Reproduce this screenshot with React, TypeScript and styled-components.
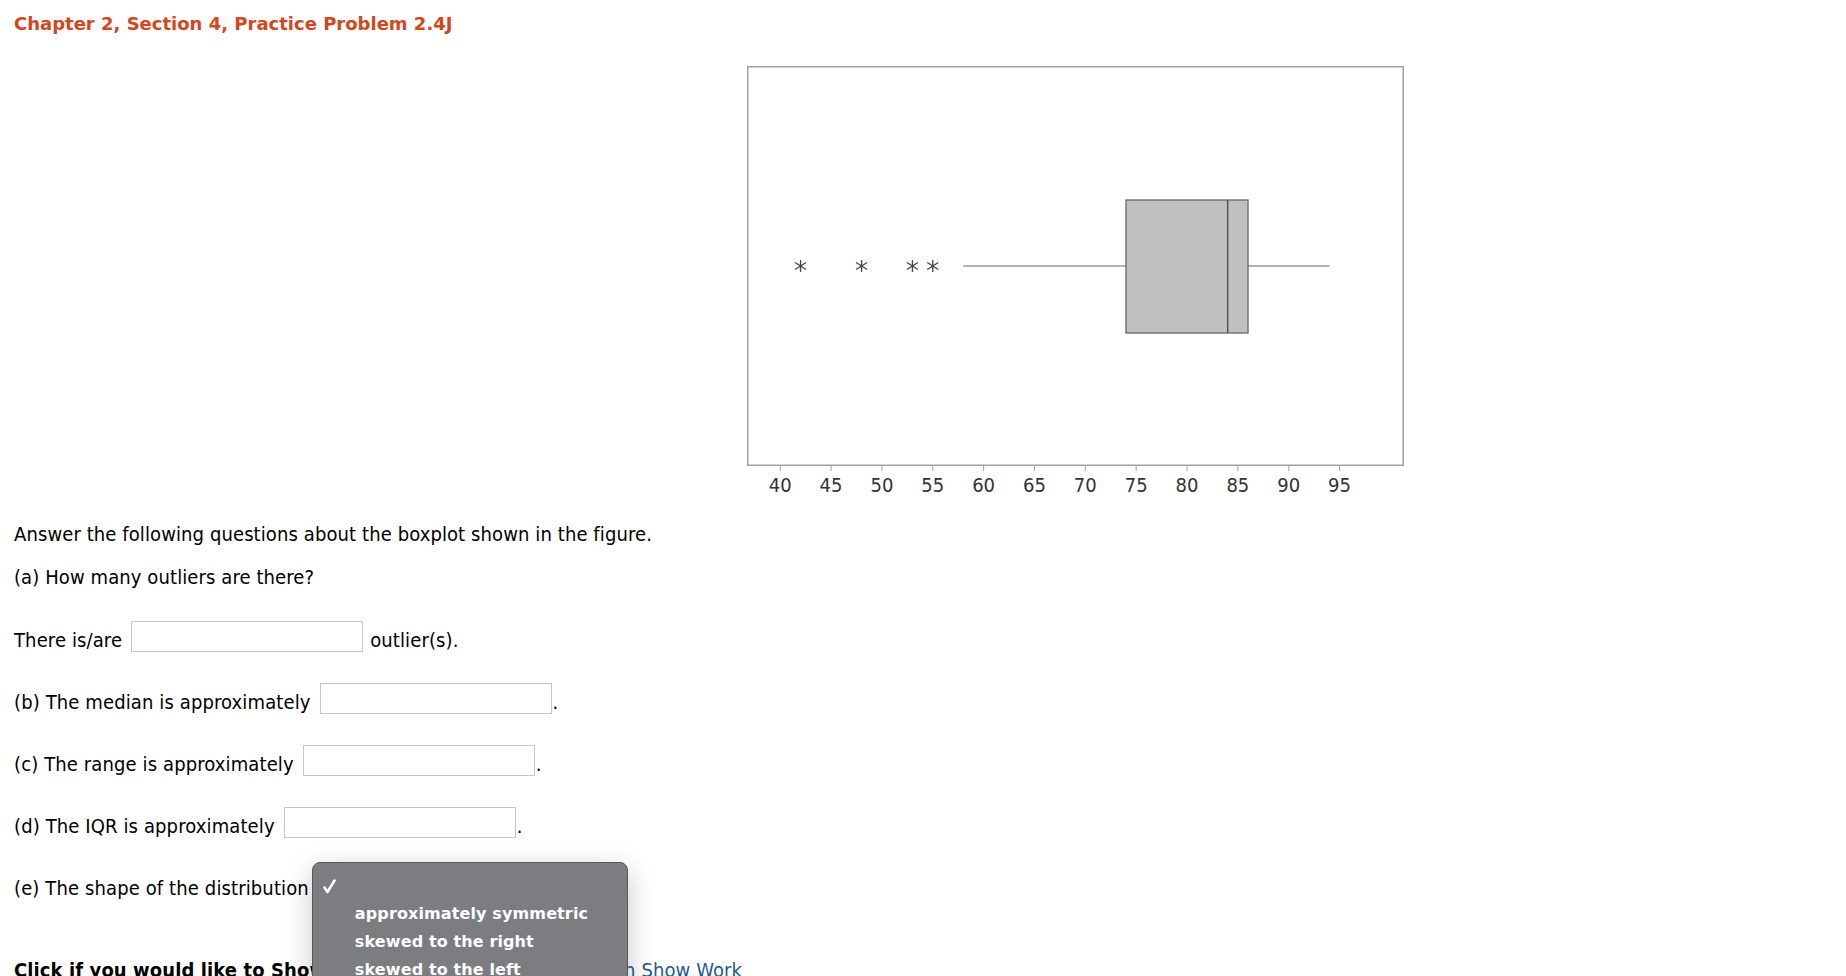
import React from 'react';
import styled, { createGlobalStyle } from 'styled-components';

const GlobalStyle = createGlobalStyle`
  html, body {
    margin: 0;
    padding: 0;
    background: #ffffff;
    overflow: hidden;
  }
  body {
    font-family: "DejaVu Sans Condensed", "DejaVu Sans", sans-serif;
    font-stretch: condensed;
    color: #000;
  }
`;

const Page = styled.div`
  padding: 12px 14px 0 14px;
  height: 976px;
  box-sizing: border-box;
`;

const Title = styled.h1`
  margin: 0;
  font-family: "DejaVu Sans", Verdana, sans-serif;
  font-stretch: normal;
  font-weight: bold;
  font-size: 18px;
  line-height: 24px;
  color: #d4461c;
`;

const Figure = styled.div`
  margin: 30px 0 0 733px;
  width: 660px;
  height: 434px;
`;

const Text = styled.p<{ $gap: number }>`
  margin: ${(p) => p.$gap}px 0 0 0;
  font-size: 20px;
  line-height: 24px;
  letter-spacing: 0.1px;
`;

const Row = styled.div<{ $gap: number }>`
  display: flex;
  align-items: flex-end;
  height: 31px;
  margin-top: ${(p) => p.$gap}px;
  font-size: 20px;
  line-height: 24px;
  letter-spacing: 0.12px;
`;

const Label = styled.span`
  margin-right: 9px;
`;

const Blank = styled.input`
  width: 232px;
  height: 31px;
  box-sizing: border-box;
  border: 1px solid #c6c6c6;
  margin: 0;
  padding: 0 4px;
  background: #fff;
  outline: none;
`;

const After = styled.span<{ $gap: number }>`
  margin-left: ${(p) => p.$gap}px;
`;

const SelectSlot = styled.div`
  position: relative;
  width: 120px;
  height: 24px;
  margin-left: 4px;
`;

const Menu = styled.div`
  position: absolute;
  left: -1px;
  top: -14px;
  width: 316px;
  height: 140px;
  box-sizing: border-box;
  padding-top: 9px;
  background: #7b7d81;
  border: 1px solid #55575a;
  border-radius: 8px;
  box-shadow: 0 8px 28px rgba(0, 0, 0, 0.22);
  font-family: "DejaVu Sans", "Lucida Grande", sans-serif;
  font-stretch: normal;
  z-index: 2;
`;

const MenuItem = styled.div`
  position: relative;
  height: 28px;
  line-height: 28px;
  padding-left: 42px;
  color: #ffffff;
  font-size: 16px;
  font-weight: bold;
`;

const Check = styled.svg`
  position: absolute;
  left: 10px;
  top: 7px;
`;

const Footer = styled.p`
  margin: 58px 0 0 0;
  font-size: 20px;
  line-height: 24px;
  letter-spacing: 0.1px;
`;

const Strong = styled.strong`
  font-weight: bold;
`;

const Link = styled.a`
  color: #1f5b8e;
  text-decoration: none;
  margin-left: 18px;
`;

const ticks = [40, 45, 50, 55, 60, 65, 70, 75, 80, 85, 90, 95];
const outliers = [42, 48, 53, 55];
const X = (v: number) => 379 + (v - 74) * 10.17;

const Star = ({ cx, cy }: { cx: number; cy: number }) => (
  <g stroke="#444" strokeWidth={1.3}>
    <line x1={cx} y1={cy - 6} x2={cx} y2={cy + 6} />
    <line x1={cx - 5.5} y1={cy - 3.5} x2={cx + 5.5} y2={cy + 3.5} />
    <line x1={cx - 5.5} y1={cy + 3.5} x2={cx + 5.5} y2={cy - 3.5} />
  </g>
);

const BoxPlot = () => (
  <svg width={660} height={434} viewBox="0 0 660 434">
    <rect x={0.75} y={0.75} width={655.5} height={398.5} fill="#fff" stroke="#a2a2a2" strokeWidth={1.5} />
    {ticks.map((t) => (
      <g key={t}>
        <line x1={X(t)} y1={399} x2={X(t)} y2={405} stroke="#a2a2a2" strokeWidth={1} />
        <text
          x={X(t)}
          y={426}
          textAnchor="middle"
          fontFamily='"DejaVu Sans Condensed", "DejaVu Sans", sans-serif'
          fontSize={20}
          fill="#333"
        >
          {t}
        </text>
      </g>
    ))}
    <line x1={X(58)} y1={200} x2={X(74)} y2={200} stroke="#666" strokeWidth={1.2} />
    <line x1={X(86)} y1={200} x2={X(94)} y2={200} stroke="#666" strokeWidth={1.2} />
    <rect x={X(74)} y={134} width={X(86) - X(74)} height={133} fill="#c0c0c0" stroke="#666" strokeWidth={1.3} />
    <line x1={X(84)} y1={134} x2={X(84)} y2={267} stroke="#555" strokeWidth={1.5} />
    {outliers.map((o) => (
      <Star key={o} cx={X(o)} cy={200} />
    ))}
  </svg>
);

const App = () => (
  <>
    <GlobalStyle />
    <Page>
      <Title>Chapter 2, Section 4, Practice Problem 2.4J</Title>
      <Figure>
        <BoxPlot />
      </Figure>
      <Text $gap={22}>Answer the following questions about the boxplot shown in the figure.</Text>
      <Text $gap={19}>(a) How many outliers are there?</Text>
      <Row $gap={32}>
        <Label>There is/are</Label>
        <Blank />
        <After $gap={7}>outlier(s).</After>
      </Row>
      <Row $gap={31}>
        <Label>(b) The median is approximately</Label>
        <Blank />
        <After $gap={1}>.</After>
      </Row>
      <Row $gap={31}>
        <Label>(c) The range is approximately</Label>
        <Blank />
        <After $gap={1}>.</After>
      </Row>
      <Row $gap={31}>
        <Label>(d) The IQR is approximately</Label>
        <Blank />
        <After $gap={1}>.</After>
      </Row>
      <Row $gap={31}>
        <span>(e) The shape of the distribution</span>
        <SelectSlot>
          <Menu>
            <MenuItem>
              <Check width={13} height={15} viewBox="0 0 13 15">
                <path d="M1.5 8.5 L4.5 13 L11.5 1.5" fill="none" stroke="#fff" strokeWidth={2.6} strokeLinecap="round" strokeLinejoin="round" />
              </Check>
            </MenuItem>
            <MenuItem>approximately symmetric</MenuItem>
            <MenuItem>skewed to the right</MenuItem>
            <MenuItem>skewed to the left</MenuItem>
          </Menu>
        </SelectSlot>
      </Row>
      <Footer>
        <Strong>Click if you would like to Show Work for this question:</Strong>
        <Link href="#">Open Show Work</Link>
      </Footer>
    </Page>
  </>
);

export default App;
